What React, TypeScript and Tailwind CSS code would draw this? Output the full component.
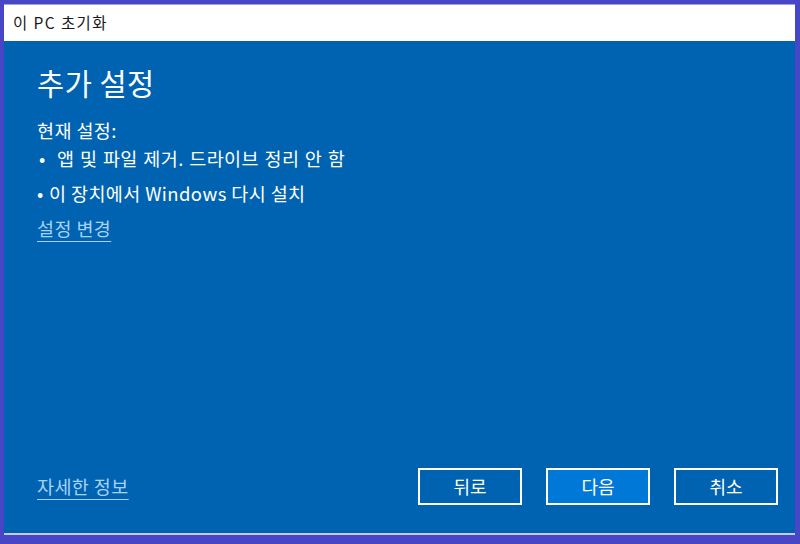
import React from "react";

const font = { fontFamily: '"Noto Sans CJK KR", "Noto Sans", sans-serif' };

export default function App() {
  return (
    <div
      className="w-[800px] h-[544px] bg-[#4646c6] pt-[4px] pl-[4px] pr-[5px] pb-[9px] flex flex-col"
      style={font}
    >
      <div className="flex flex-col flex-1 border-b-2 border-[#c4cbe6]">
        <div className="h-[37px] bg-white border-t border-[#9fa4dc] flex items-center pl-[9px] text-[15.5px] tracking-[1.4px] text-[#1a1a1a]">
          이 PC 초기화
        </div>
        <div className="flex-1 bg-[#0063b1] flex flex-col pl-[33px] pr-[17px] text-white">
          <div className="text-[29.5px] h-[40px] leading-[40px] mt-[21px] tracking-[0.5px]">추가 설정</div>
          <div className="text-[18.5px] h-[24px] leading-[24px] mt-[16px] tracking-[0.4px]">현재 설정:</div>
          <div className="text-[18.5px] h-[24px] leading-[24px] mt-[4px] tracking-[0.4px] flex">
            <span className="w-[20px] pl-[2px]">•</span>
            <span className="[word-spacing:1px]">앱 및 파일 제거. 드라이브 정리 안 함</span>
          </div>
          <div className="text-[18.5px] h-[24px] leading-[24px] mt-[11px] tracking-[0.4px] flex">
            <span className="w-[12px]">•</span>
            <span>이 장치에서 Windows 다시 설치</span>
          </div>
          <div className="text-[18.5px] h-[24px] leading-[24px] mt-[11px] tracking-[0.4px]">
            <span className="text-[#a6d2f5] underline underline-offset-[5px]">설정 변경</span>
          </div>
          <div className="flex-1" />
          <div className="flex items-center mb-[28px]">
            <span className="text-[18.5px] tracking-[0.4px] text-[#a6d2f5] underline underline-offset-[5px]">자세한 정보</span>
            <div className="flex-1" />
            <div className="flex gap-[24px]">
              <button className="w-[104px] h-[37px] border-2 border-white text-[18px] text-white">뒤로</button>
              <button className="w-[104px] h-[37px] border-2 border-white bg-[#0078d7] text-[18px] text-white">다음</button>
              <button className="w-[104px] h-[37px] border-2 border-white text-[18px] text-white">취소</button>
            </div>
          </div>
        </div>
      </div>
    </div>
  );
}
